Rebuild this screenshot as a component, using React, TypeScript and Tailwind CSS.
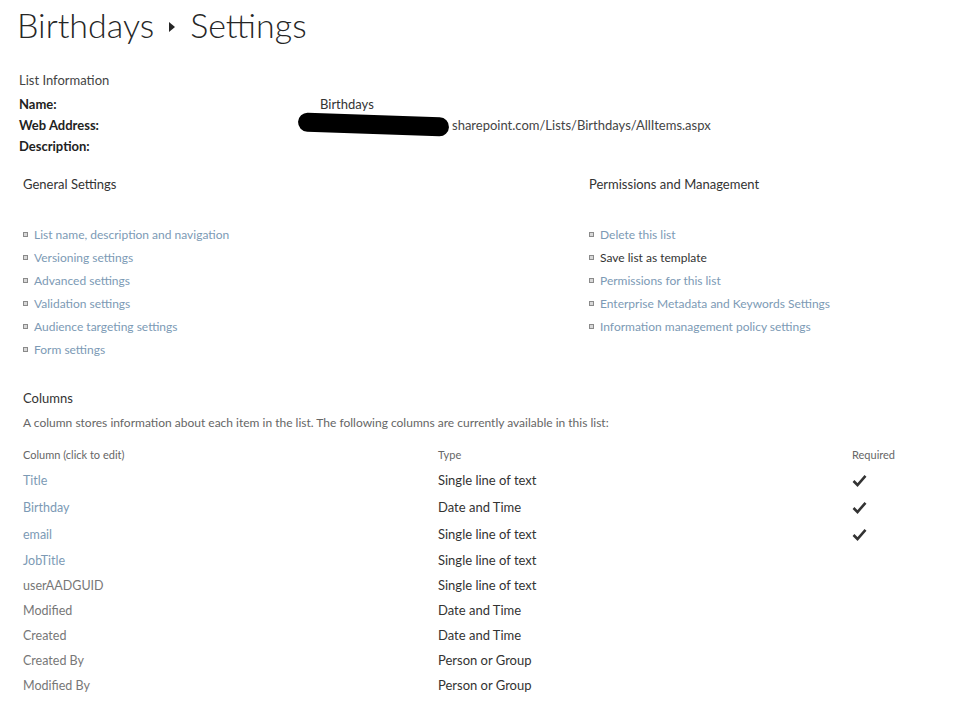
import React from "react";

const generalLinks = [
  "List name, description and navigation",
  "Versioning settings",
  "Advanced settings",
  "Validation settings",
  "Audience targeting settings",
  "Form settings",
];

const permLinks: { label: string; dark?: boolean }[] = [
  { label: "Delete this list" },
  { label: "Save list as template", dark: true },
  { label: "Permissions for this list" },
  { label: "Enterprise Metadata and Keywords Settings" },
  { label: "Information management policy settings" },
];

const columns: { name: string; type: string; req?: boolean; link?: boolean; h: string }[] = [
  { name: "Title", type: "Single line of text", req: true, link: true, h: "h-[27px]" },
  { name: "Birthday", type: "Date and Time", req: true, link: true, h: "h-[27px]" },
  { name: "email", type: "Single line of text", req: true, link: true, h: "h-[27px]" },
  { name: "JobTitle", type: "Single line of text", link: true, h: "h-[26px]" },
  { name: "userAADGUID", type: "Single line of text", h: "h-[24px]" },
  { name: "Modified", type: "Date and Time", h: "h-[25px]" },
  { name: "Created", type: "Date and Time", h: "h-[25px]" },
  { name: "Created By", type: "Person or Group", h: "h-[25px]" },
  { name: "Modified By", type: "Person or Group", h: "h-[25px]" },
];

function Bullet() {
  return <span className="inline-block w-[5px] h-[5px] border border-[#8a8a8a] bg-[#d8d8d8] mr-[6px] shrink-0" />;
}

function Check() {
  return (
    <svg width="15" height="13" viewBox="0 0 15 13" className="block">
      <path d="M1.5 7 L5.5 11 L13.5 1.8" fill="none" stroke="#333" strokeWidth="2.6" />
    </svg>
  );
}

export default function App() {
  return (
    <div className="w-[954px] h-[710px] bg-white overflow-hidden text-[13px] text-[#333]" style={{ fontFamily: 'Lato, "Open Sans", sans-serif' }}>
      {/* Page title */}
      <div className="flex items-center pl-[17px] h-[50px] text-[34px] font-light text-[#262626] leading-none">
        <span>Birthdays</span>
        <svg width="6" height="10" viewBox="0 0 6 10" className="mx-[15px] mt-[4px]">
          <path d="M0 0 L6 5 L0 10 Z" fill="#262626" />
        </svg>
        <span>Settings</span>
      </div>

      {/* List information */}
      <div className="pl-[19px] pt-[22px]">
        <div className="text-[#444] leading-[17px]">List Information</div>
        <div className="grid grid-cols-[301px_1fr] mt-[5px] leading-[21px]">
          <div className="font-bold text-[#222]">Name:</div>
          <div className="text-[#333]">Birthdays</div>
          <div className="font-bold text-[#222]">Web Address:</div>
          <div className="relative text-[#444]">
            <span className="invisible">https://tenant.</span>
            <span className="absolute left-[132px] top-0">sharepoint.com/Lists/Birthdays/AllItems.aspx</span>
            <span className="absolute left-[-22px] top-[0px] w-[151px] h-[19px] bg-black rounded-full rotate-[2deg]" />
          </div>
          <div className="font-bold text-[#222]">Description:</div>
          <div />
        </div>
      </div>

      {/* Settings groups */}
      <div className="grid grid-cols-[566px_1fr] pl-[23px] pt-[18px]">
        <div>
          <div className="leading-[18px] text-[#333]">General Settings</div>
          <ul className="mt-[30px] text-[12px]">
            {generalLinks.map((l) => (
              <li key={l} className="flex items-center h-[23px] text-[#7c9ab5]">
                <Bullet />
                {l}
              </li>
            ))}
          </ul>
        </div>
        <div>
          <div className="leading-[18px] text-[#333]">Permissions and Management</div>
          <ul className="mt-[30px] text-[12px]">
            {permLinks.map((l) => (
              <li key={l.label} className={`flex items-center h-[23px] ${l.dark ? "text-[#333]" : "text-[#7c9ab5]"}`}>
                <Bullet />
                {l.label}
              </li>
            ))}
          </ul>
        </div>
      </div>

      {/* Columns */}
      <div className="pl-[23px] pt-[28px]">
        <div className="leading-[18px] text-[#333]">Columns</div>
        <div className="mt-[8px] text-[12px] text-[#666] leading-[16px]">
          A column stores information about each item in the list. The following columns are currently available in this list:
        </div>
        <div className="grid grid-cols-[415px_414px_1fr] mt-[13px] items-center">
          <div className="text-[11px] text-[#666] h-[23px] flex items-center">Column (click to edit)</div>
          <div className="text-[11px] text-[#666] h-[23px] flex items-center">Type</div>
          <div className="text-[11px] text-[#666] h-[23px] flex items-center">Required</div>
          {columns.map((c) => (
            <React.Fragment key={c.name}>
              <div className={`flex items-center ${c.h} pt-[1px] text-[12.5px] ${c.link ? "text-[#7c9ab5]" : "text-[#777]"}`}>{c.name}</div>
              <div className={`flex items-center ${c.h} text-[#333]`}>{c.type}</div>
              <div className={`flex items-center ${c.h}`}>{c.req ? <Check /> : null}</div>
            </React.Fragment>
          ))}
        </div>
      </div>
    </div>
  );
}
